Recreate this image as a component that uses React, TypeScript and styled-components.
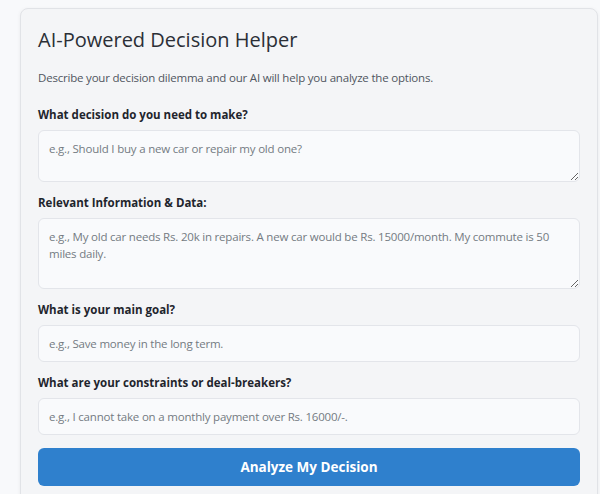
import styled, { createGlobalStyle } from 'styled-components';

const GlobalStyle = createGlobalStyle`
  html, body {
    margin: 0;
    padding: 0;
    background-color: #f8f9fb;
    font-family: 'Open Sans', 'Noto Sans', Arial, sans-serif;
  }
  * {
    box-sizing: border-box;
  }
`;

type Field = {
  id: string;
  label: string;
  placeholder: string;
  multiline?: boolean;
  height: number;
};

const fields: Field[] = [
  {
    id: 'decision',
    label: 'What decision do you need to make?',
    placeholder: 'e.g., Should I buy a new car or repair my old one?',
    multiline: true,
    height: 52,
  },
  {
    id: 'info',
    label: 'Relevant Information & Data:',
    placeholder:
      'e.g., My old car needs Rs. 20k in repairs. A new car would be Rs. 15000/month. My commute is 50 miles daily.',
    multiline: true,
    height: 71,
  },
  {
    id: 'goal',
    label: 'What is your main goal?',
    placeholder: 'e.g., Save money in the long term.',
    height: 37,
  },
  {
    id: 'constraints',
    label: 'What are your constraints or deal-breakers?',
    placeholder: 'e.g., I cannot take on a monthly payment over Rs. 16000/-.',
    height: 37,
  },
];

const App = () => {
  return (
    <>
      <GlobalStyle />
      <Page>
        <Card>
          <Title>AI-Powered Decision Helper</Title>
          <Intro>
            Describe your decision dilemma and our AI will help you analyze the
            options.
          </Intro>
          <Form onSubmit={(e) => e.preventDefault()}>
            {fields.map((field) => (
              <FieldGroup key={field.id}>
                <Label htmlFor={field.id}>{field.label}</Label>
                {field.multiline ? (
                  <TextArea
                    id={field.id}
                    placeholder={field.placeholder}
                    $height={field.height}
                  />
                ) : (
                  <Input
                    id={field.id}
                    type="text"
                    placeholder={field.placeholder}
                    $height={field.height}
                  />
                )}
              </FieldGroup>
            ))}
            <SubmitButton type="submit">Analyze My Decision</SubmitButton>
          </Form>
        </Card>
      </Page>
    </>
  );
};

const Page = styled.div`
  padding: 8px 2px 0 20px;
`;
const Card = styled.div`
  background-color: #f4f5f7;
  border: 1px solid #e1e3e7;
  border-radius: 8px;
  box-shadow: 0 1px 4px rgba(0, 0, 0, 0.06);
  padding: 18px 17px 20px 17px;
`;
const Title = styled.h1`
  margin: 0 0 16px 0;
  font-size: 20px;
  font-weight: 400;
  line-height: 26px;
  color: #2b2f36;
`;
const Intro = styled.p`
  margin: 0 0 20px 0;
  font-size: 11.5px;
  letter-spacing: -0.2px;
  line-height: 18px;
  color: #505660;
`;
const Form = styled.form`
  display: flex;
  flex-direction: column;
  gap: 13px;
`;
const FieldGroup = styled.div`
  display: flex;
  flex-direction: column;
  gap: 7px;
`;
const Label = styled.label`
  font-size: 11.5px;
  font-weight: 700;
  line-height: 16px;
  color: #1f252d;
`;
const fieldStyles = `
  width: 100%;
  background-color: #f9fafc;
  border: 1px solid #e3e5ea;
  border-radius: 6px;
  padding: 9px 10px;
  font-family: 'Open Sans', 'Noto Sans', Arial, sans-serif;
  font-size: 11.5px;
  letter-spacing: -0.2px;
  line-height: 17px;
  color: #333;
  outline: none;
  &::placeholder {
    color: #747a82;
  }
`;
const TextArea = styled.textarea<{ $height: number }>`
  ${fieldStyles}
  display: block;
  height: ${({ $height }) => $height}px;
  resize: vertical;
`;
const Input = styled.input<{ $height: number }>`
  ${fieldStyles}
  height: ${({ $height }) => $height}px;
`;
const SubmitButton = styled.button`
  height: 38px;
  border: none;
  border-radius: 6px;
  background-color: #2f80cd;
  color: #ffffff;
  font-family: 'Open Sans', 'Noto Sans', Arial, sans-serif;
  font-size: 13.5px;
  font-weight: 700;
  cursor: pointer;
`;

export default App;
